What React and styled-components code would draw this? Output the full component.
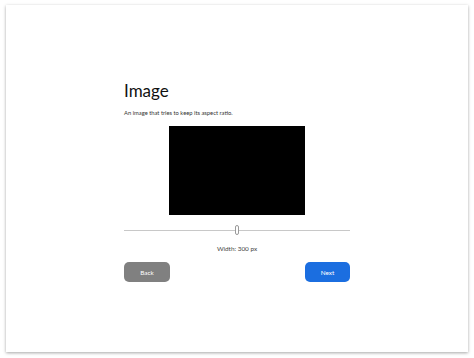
import React from "react";
import styled, { createGlobalStyle } from "styled-components";

const Global = createGlobalStyle`
  html, body { margin: 0; padding: 0; background: #fff; }
  body { font-family: "Source Sans Pro", Lato, "Noto Sans", sans-serif; }
`;

const Page = styled.div`
  padding: 5px 6px 6px 6px;
`;

const Card = styled.div`
  height: 347px;
  background: #fff;
  box-shadow: 0 1px 3px rgba(0, 0, 0, 0.35);
  display: flex;
  justify-content: center;
  align-items: flex-start;
  padding-top: 73px;
  box-sizing: border-box;
`;

const Column = styled.div`
  width: 226px;
  display: flex;
  flex-direction: column;
`;

const Title = styled.h1`
  margin: 0;
  font-size: 17px;
  font-weight: 400;
  line-height: 26px;
  color: #111;
`;

const Subtitle = styled.p`
  margin: 5px 0 0 0;
  font-size: 5.8px;
  line-height: 8px;
  color: #333;
`;

const Picture = styled.div`
  align-self: center;
  width: 136px;
  height: 89px;
  background: #000;
  margin-top: 9px;
`;

const SliderWrap = styled.div`
  position: relative;
  height: 10px;
  margin-top: 10px;
  display: flex;
  align-items: center;
`;

const Track = styled.div`
  flex: 1;
  height: 1px;
  background: #c8c8c8;
`;

const Thumb = styled.div`
  position: absolute;
  left: 111px;
  top: 0;
  width: 4px;
  height: 10px;
  border: 1px solid #9a9a9a;
  border-radius: 2px;
  background: #fff;
  box-sizing: border-box;
`;

const Caption = styled.div`
  margin-top: 9px;
  text-align: center;
  font-size: 6.4px;
  line-height: 10px;
  color: #444;
`;

const Buttons = styled.div`
  display: flex;
  justify-content: space-between;
  margin-top: 8px;
`;

const Button = styled.button`
  width: ${(p) => p.$w}px;
  height: 20px;
  border: none;
  border-radius: 5px;
  background: ${(p) => p.$bg};
  color: #fff;
  font-family: inherit;
  font-size: 6.4px;
  padding: 0;
`;

export default function App() {
  return (
    <>
      <Global />
      <Page>
        <Card>
          <Column>
            <Title>Image</Title>
            <Subtitle>An image that tries to keep its aspect ratio.</Subtitle>
            <Picture />
            <SliderWrap>
              <Track />
              <Thumb />
            </SliderWrap>
            <Caption>Width: 300 px</Caption>
            <Buttons>
              <Button $bg="#808080" $w={46}>Back</Button>
              <Button $bg="#1b6ee0" $w={45}>Next</Button>
            </Buttons>
          </Column>
        </Card>
      </Page>
    </>
  );
}
